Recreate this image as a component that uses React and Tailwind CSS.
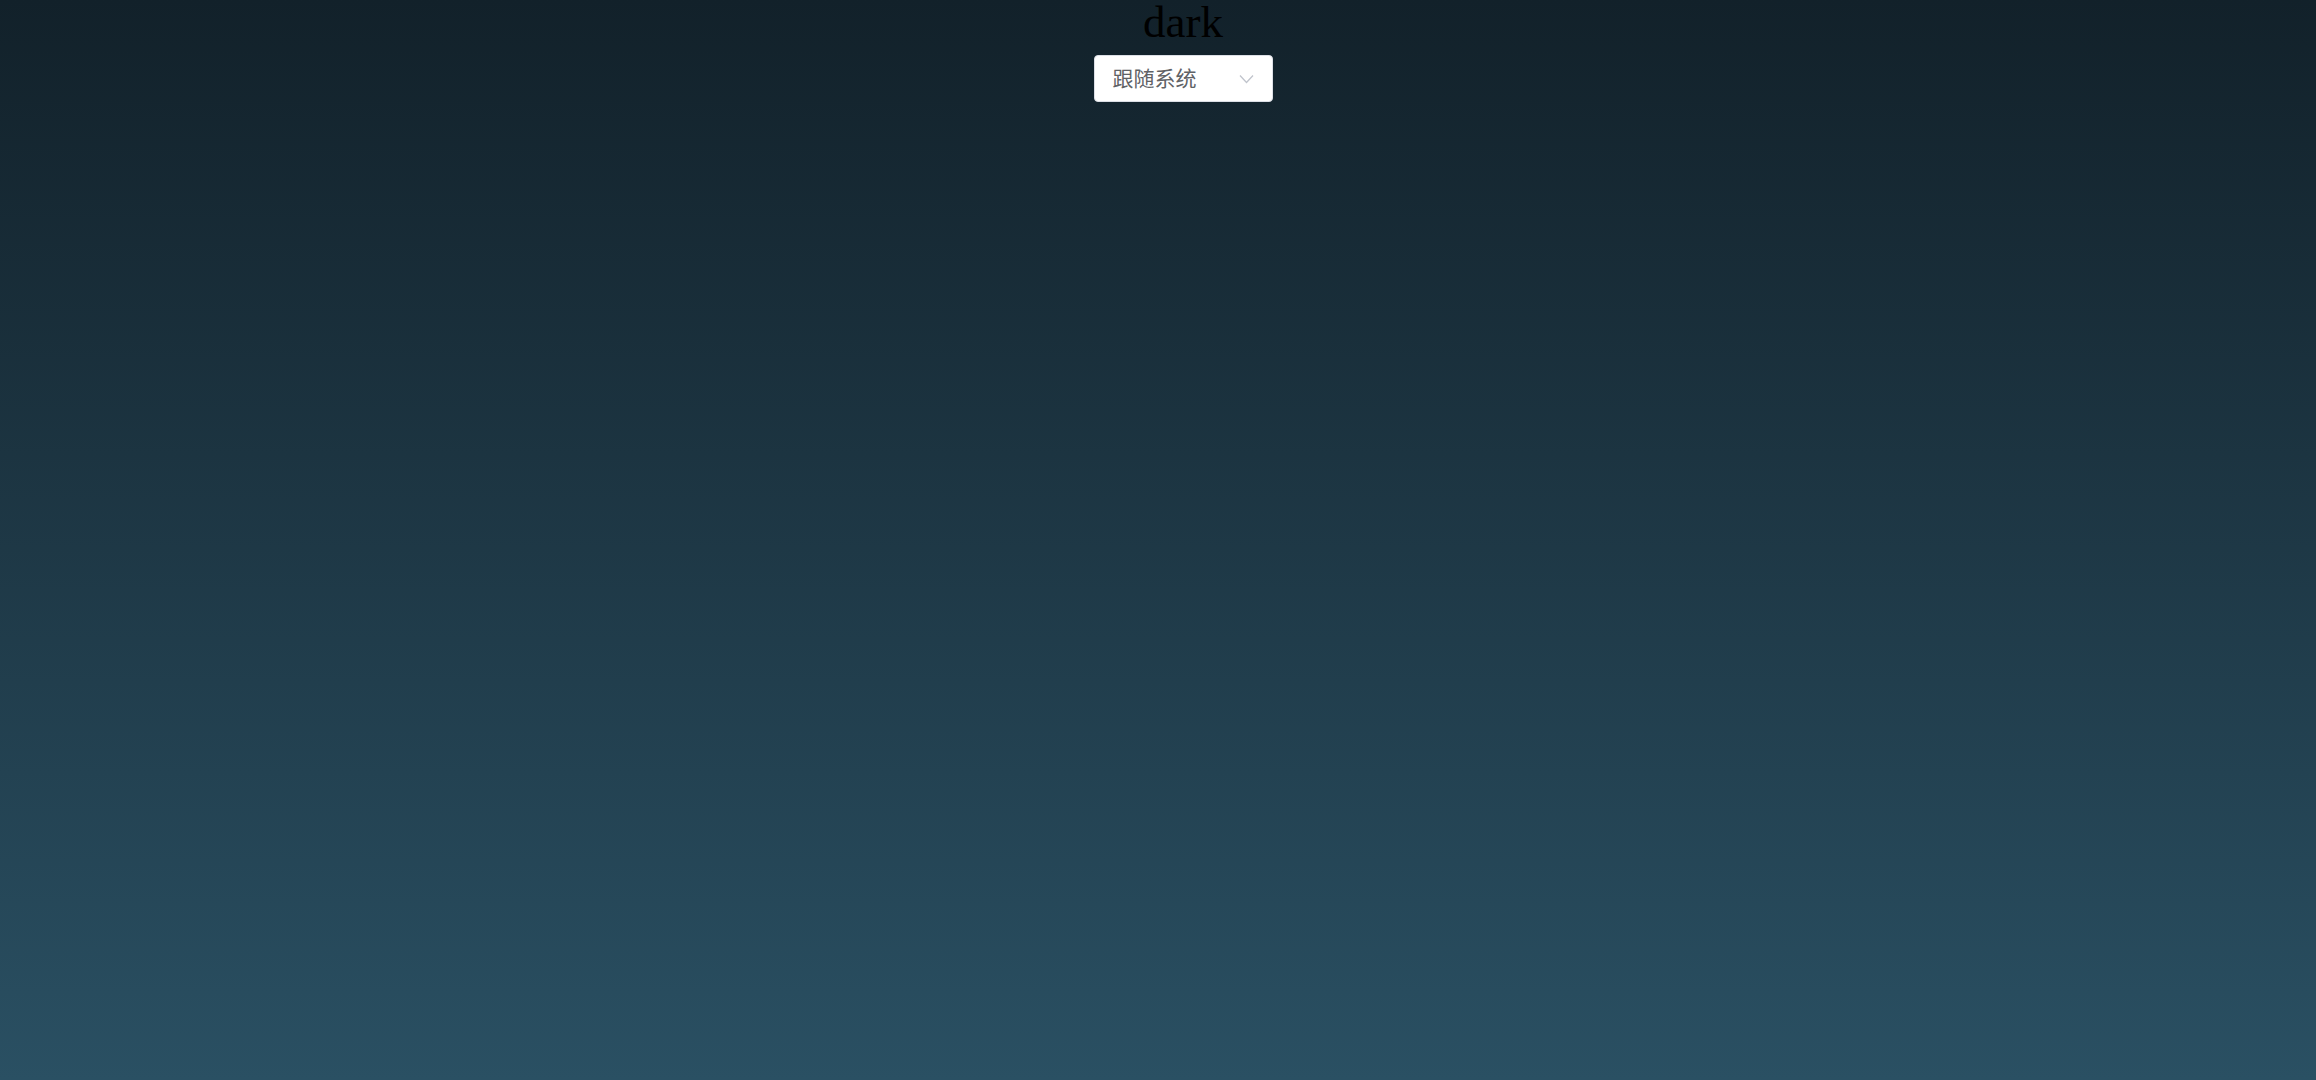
import { useState } from "react";

const opcoes = ["跟随系统", "浅色", "深色"];

export default function App() {
  const [tema, setTema] = useState("跟随系统");
  const [aberto, setAberto] = useState(false);

  return (
    <div className="min-h-screen w-full bg-gradient-to-b from-[#12212a] to-[#2a5063] flex flex-col items-center pl-[50px]">
      <h1
        className="text-[45px] leading-[44px] text-black font-normal"
        style={{ fontFamily: '"Liberation Serif", "Times New Roman", serif' }}
      >
        dark
      </h1>

      {/* seletor de tema */}
      <div className="relative mt-[11px]">
        <button
          onClick={() => setAberto(!aberto)}
          className="w-[179px] h-[47px] bg-white rounded-[4px] border border-[#dcdfe6] flex items-center justify-between pl-[18px] pr-[18px] text-[21px] text-[#606266]"
          style={{ fontFamily: '"Liberation Sans", Arial, "Noto Sans CJK SC", sans-serif' }}
        >
          <span>{tema}</span>
          <svg width="15" height="10" viewBox="0 0 15 10" fill="none" className={aberto ? "rotate-180" : ""}>
            <path d="M1 1.5 L7.5 8.5 L14 1.5" stroke="#c0c4cc" strokeWidth="1.3" />
          </svg>
        </button>

        {aberto && (
          <ul className="absolute left-0 top-[54px] w-[179px] bg-white rounded-[4px] border border-[#e4e7ed] shadow-md py-[9px] z-10">
            {opcoes.map((o) => (
              <li
                key={o}
                onClick={() => {
                  setTema(o);
                  setAberto(false);
                }}
                className={
                  "px-[30px] h-[51px] leading-[51px] text-[21px] cursor-pointer hover:bg-[#f5f7fa] " +
                  (o === tema ? "text-[#409eff] font-bold" : "text-[#606266]")
                }
                style={{ fontFamily: '"Liberation Sans", Arial, "Noto Sans CJK SC", sans-serif' }}
              >
                {o}
              </li>
            ))}
          </ul>
        )}
      </div>
    </div>
  );
}
